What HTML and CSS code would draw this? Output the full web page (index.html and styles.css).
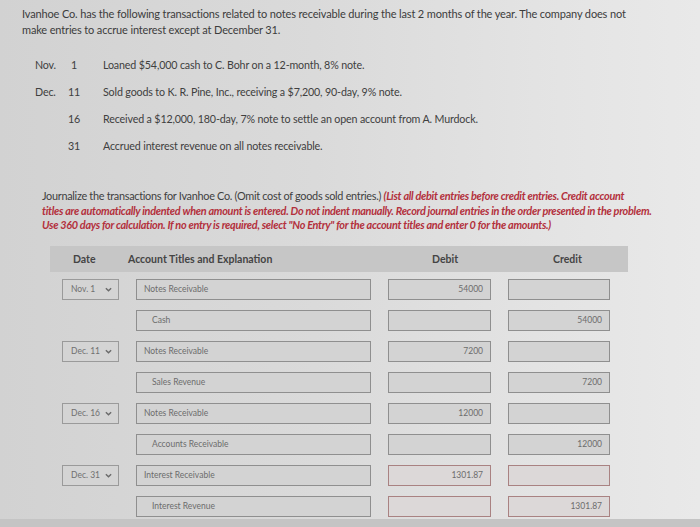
FILE: index.html
```html
<!DOCTYPE html>
<html>
<head>
<meta charset="utf-8">
<link rel="stylesheet" href="styles.css">
</head>
<body>
<div class="page">
  <p class="intro">Ivanhoe Co. has the following transactions related to notes receivable during the last 2 months of the year. The company does not make entries to accrue interest except at December 31.</p>

  <div class="trans">
    <div class="t-row"><span class="mon">Nov.</span><span class="day">1</span><span class="desc">Loaned $54,000 cash to C. Bohr on a 12-month, 8% note.</span></div>
    <div class="t-row"><span class="mon">Dec.</span><span class="day">11</span><span class="desc">Sold goods to K. R. Pine, Inc., receiving a $7,200, 90-day, 9% note.</span></div>
    <div class="t-row"><span class="mon"></span><span class="day">16</span><span class="desc">Received a $12,000, 180-day, 7% note to settle an open account from A. Murdock.</span></div>
    <div class="t-row"><span class="mon"></span><span class="day">31</span><span class="desc">Accrued interest revenue on all notes receivable.</span></div>
  </div>

  <p class="instr">Journalize the transactions for Ivanhoe Co. (Omit cost of goods sold entries.) <em>(List all debit entries before credit entries. Credit account<br>titles are automatically indented when amount is entered. Do not indent manually. Record journal entries in the order presented in the problem.<br>Use 360 days for calculation. If no entry is required, select "No Entry" for the account titles and enter 0 for the amounts.)</em></p>

  <div class="journal">
    <div class="head">
      <span class="h-date">Date</span>
      <span class="h-acct">Account Titles and Explanation</span>
      <span class="h-debit">Debit</span>
      <span class="h-credit">Credit</span>
    </div>

    <div class="row">
      <div class="sel">Nov. 1<svg class="chev" viewBox="0 0 8 5"><path d="M1 1l3 3 3-3" /></svg></div>
      <div class="fld acct">Notes Receivable</div>
      <div class="fld num">54000</div>
      <div class="fld num"></div>
    </div>
    <div class="row">
      <div></div>
      <div class="fld acct ind">Cash</div>
      <div class="fld num"></div>
      <div class="fld num">54000</div>
    </div>
    <div class="row">
      <div class="sel">Dec. 11<svg class="chev" viewBox="0 0 8 5"><path d="M1 1l3 3 3-3" /></svg></div>
      <div class="fld acct">Notes Receivable</div>
      <div class="fld num">7200</div>
      <div class="fld num"></div>
    </div>
    <div class="row">
      <div></div>
      <div class="fld acct ind">Sales Revenue</div>
      <div class="fld num"></div>
      <div class="fld num">7200</div>
    </div>
    <div class="row">
      <div class="sel">Dec. 16<svg class="chev" viewBox="0 0 8 5"><path d="M1 1l3 3 3-3" /></svg></div>
      <div class="fld acct">Notes Receivable</div>
      <div class="fld num">12000</div>
      <div class="fld num"></div>
    </div>
    <div class="row">
      <div></div>
      <div class="fld acct ind">Accounts Receivable</div>
      <div class="fld num"></div>
      <div class="fld num">12000</div>
    </div>
    <div class="row">
      <div class="sel">Dec. 31<svg class="chev" viewBox="0 0 8 5"><path d="M1 1l3 3 3-3" /></svg></div>
      <div class="fld acct">Interest Receivable</div>
      <div class="fld num red">1301.87</div>
      <div class="fld num red"></div>
    </div>
    <div class="row">
      <div></div>
      <div class="fld acct ind">Interest Revenue</div>
      <div class="fld num red"></div>
      <div class="fld num red">1301.87</div>
    </div>
  </div>
</div>
</body>
</html>
```

FILE: styles.css
```css
html, body {
  margin: 0;
  padding: 0;
}
body {
  width: 700px;
  height: 527px;
  overflow: hidden;
  font-family: "Lato", "Liberation Sans", sans-serif;
  color: #3a3a3a;
  background: linear-gradient(90deg, #d2d2d2 0%, #dadada 45%, #e4e4e4 80%, #e9e9e9 100%);
}
.page {
  padding: 6px 0 0 22px;
  box-sizing: border-box;
  border-bottom: 8px solid #c4c4c4;
  height: 527px;
}
.intro {
  margin: 0;
  width: 608px;
  font-size: 11px;
  line-height: 16px;
  letter-spacing: -0.15px;
  color: #3c3c3c;
}
.trans {
  margin: 18px 0 0 13px;
  display: flex;
  flex-direction: column;
  gap: 11px;
}
.t-row {
  display: flex;
  align-items: center;
  height: 16px;
  font-size: 10.7px;
  color: #404040;
  letter-spacing: -0.15px;
}
.mon {
  width: 28px;
}
.day {
  width: 22px;
  text-align: center;
}
.desc {
  margin-left: 18px;
}
.instr {
  margin: 36px 0 0 20px;
  width: 640px;
  font-size: 10.9px;
  line-height: 14.5px;
  letter-spacing: -0.3px;
  color: #3f3f3f;
}
.instr em {
  color: #b3303c;
  font-weight: 700;
  font-style: italic;
}
.journal {
  margin: 13px 0 0 28px;
  width: 578px;
}
.head {
  display: grid;
  grid-template-columns: 78px 304px 121px 75px;
  align-items: center;
  height: 26px;
  background: #c6c6c6;
  font-size: 10.5px;
  font-weight: 700;
  color: #444;
}
.h-date { padding-left: 23px; }
.h-acct { padding-left: 0; }
.h-debit { text-align: left; }
.h-credit { padding-left: 0; }
.row {
  display: grid;
  grid-template-columns: 57px 235px 103px 102px;
  column-gap: 17px;
  height: 21px;
  margin-top: 10px;
  padding-left: 12px;
}
.head + .row {
  margin-top: 7px;
}
.sel {
  display: flex;
  align-items: center;
  justify-content: space-between;
  padding: 0 6px 0 8px;
  border: 1px solid #9a9a9a;
  background: #d4d4d4;
  font-size: 8.5px;
  color: #707070;
}
.chev {
  width: 7px;
  height: 5px;
  fill: none;
  stroke: #6a6a6a;
  stroke-width: 1.6;
}
.fld {
  display: flex;
  align-items: center;
  border: 1px solid #8f8f8f;
  background: #d3d3d3;
  font-size: 8.5px;
  color: #6c6c6c;
  box-sizing: border-box;
}
.acct {
  padding-left: 7px;
}
.acct.ind {
  padding-left: 15px;
}
.num {
  justify-content: flex-end;
  padding-right: 7px;
}
.red {
  border: 1.5px solid #a98282;
  background: #dcd8d8;
}
```
